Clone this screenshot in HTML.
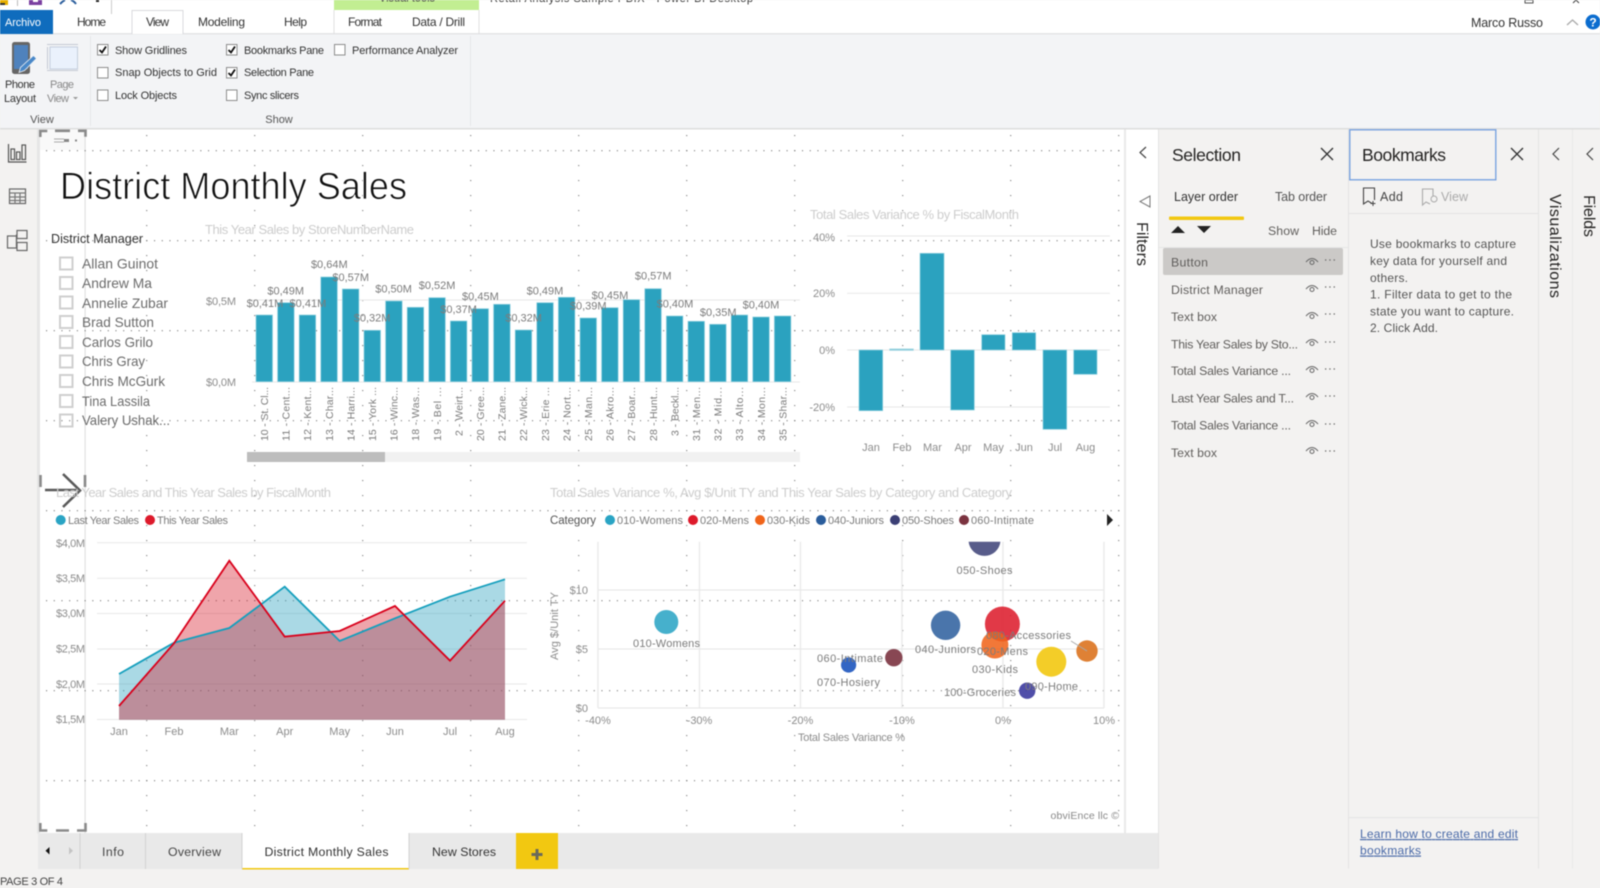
<!DOCTYPE html>
<html lang="en"><head><meta charset="utf-8"><title>District Monthly Sales</title>
<style>
html,body{margin:0;padding:0;width:1600px;height:888px;overflow:hidden;background:#f3f2f1}
svg{display:block;filter:blur(.45px)}
text{font-family:"Liberation Sans",sans-serif;font-size:11px;fill:#444}
.r{font-size:11px;fill:#333}
.m{font-size:12px;fill:#333}
.s{font-size:12.3px;fill:#605e5c}
.t{font-size:13px;fill:#cdcdcd}
.d{font-size:11px;fill:#7c7c7c}
.a{font-size:11px;fill:#8c8c8c}
.x{font-size:10.5px;fill:#7c7c7c}
.sl{font-size:14px;fill:#6c6c6c}
.h{font-size:17.5px;fill:#252423}
.v{font-size:16px;fill:#252423}
.dots line{stroke:#7c7c7c;stroke-width:1.1}
.g{stroke:#ececec;stroke-width:1.2}
.b rect{fill:#2ba2bf;stroke:#8fd0df;stroke-width:.7}
</style></head><body>
<svg width="1600" height="888" viewBox="0 0 1600 888" xmlns="http://www.w3.org/2000/svg">
<!-- backgrounds -->
<rect width="1600" height="888" fill="#f3f2f1"/>
<rect y="0" width="1600" height="34" fill="#fff"/>
<rect y="34" width="1600" height="94" fill="#f3f4f6"/>
<rect y="33" width="1600" height="1.5" fill="#e4e5e7"/>
<rect y="128" width="1600" height="1.5" fill="#dddddd"/>
<!-- top quick access -->
<rect x="0" y="0" width="8" height="5" fill="#e8b100"/><rect x="0" y="3" width="5" height="2" fill="#333"/>
<rect x="17" y="0" width="1" height="6" fill="#bbb"/>
<path d="M29 0h13v5H29z" fill="#7a3fa0"/><rect x="33" y="0" width="5" height="2" fill="#fff"/>
<path d="M60 4Q63 1 65 0M71 0Q74 1 76 4" stroke="#2a5d9c" stroke-width="2" fill="none"/>
<rect x="96" y="0" width="3" height="2" fill="#222"/>
<rect x="111" y="0" width="1" height="14" fill="#ccc"/>
<rect x="334" y="0" width="145" height="10" fill="#c2ee92"/>
<text x="407" y="1.500" text-anchor="middle" class="r">Visual tools</text>
<text x="490" y="2" class="r" textLength="263">Retail Analysis Sample PBIX - Power BI Desktop</text>
<path d="M1525 3V0h8v3h-8z" fill="none" stroke="#555"/>
<path d="M1573 3l3-3M1579 3l-3-3" stroke="#444" fill="none"/>
<!-- tabs -->
<rect x="0" y="10" width="53" height="24" fill="#0f6cbd"/>
<text x="5" y="26" style="fill:#fff" font-size="11" textLength="36">Archivo</text>
<text x="77" y="26" class="m" textLength="29">Home</text>
<path d="M132 34V10.500H183V34" fill="#fff" stroke="#d9dadd"/>
<text x="146" y="26" class="m" textLength="23">View</text>
<text x="198" y="26" class="m" textLength="47">Modeling</text>
<text x="284" y="26" class="m" textLength="23">Help</text>
<path d="M334 10v24M479 10v24" stroke="#e0e0e0"/>
<text x="348" y="26" class="m" textLength="34">Format</text>
<text x="412" y="26" class="m" textLength="53">Data / Drill</text>
<text x="1471" y="27" style="font-size:12.500px;fill:#333" textLength="72">Marco Russo</text>
<path d="M1567 25l5.500-5 5.500 5" stroke="#aaa" stroke-width="1.300" fill="none"/>
<circle cx="1593" cy="22" r="7.500" fill="#0a6ccf"/>
<text x="1593" y="26.500" text-anchor="middle" style="font-size:12px;font-weight:bold;fill:#fff">?</text>
<!-- ribbon view group -->
<rect x="12" y="42" width="18" height="32" rx="2.500" fill="#666"/>
<rect x="14" y="45" width="14" height="24" fill="#4f82bd"/>
<path d="M19 72.500l1.500-5 13-12 3 3-12 12z" fill="#4a88c8" stroke="#f3f4f6" stroke-width=".8"/>
<text x="20" y="88" text-anchor="middle" class="r" textLength="30">Phone</text>
<text x="20" y="102" text-anchor="middle" class="r" textLength="32">Layout</text>
<path d="M47 44.500h31M47 70.500h31" stroke="#c4cad4"/>
<rect x="50" y="47" width="27.500" height="22" fill="#eaf1fc" stroke="#c4cedd"/>
<rect x="47" y="47" width="1" height="22" fill="#c4cad4"/>
<text x="62" y="88" text-anchor="middle" style="font-size:11px;fill:#888" textLength="24">Page</text>
<text x="58" y="102" text-anchor="middle" style="font-size:11px;fill:#888" textLength="22">View</text>
<path d="M73 97h5l-2.500 2.500z" fill="#999"/>
<text x="42" y="123" text-anchor="middle" style="font-size:11px;fill:#555">View</text>
<text x="279" y="123" text-anchor="middle" style="font-size:11px;fill:#555">Show</text>
<path d="M90.500 36v90M470.500 36v90" stroke="#e6e7e9"/>
<!-- checkboxes -->
<g fill="#fff" stroke="#8d8d8d">
<rect x="97.500" y="44.500" width="10.500" height="10.500"/><rect x="97.500" y="67.500" width="10.500" height="10.500"/><rect x="97.500" y="90" width="10.500" height="10.500"/>
<rect x="226.500" y="44.500" width="10.500" height="10.500"/><rect x="226.500" y="67.500" width="10.500" height="10.500"/><rect x="226.500" y="90" width="10.500" height="10.500"/>
<rect x="334.500" y="44.500" width="10.500" height="10.500"/>
</g>
<g fill="none" stroke="#111" stroke-width="1.800">
<path d="M99.500 50l2.500 2.500 4-6"/><path d="M228.500 50l2.500 2.500 4-6"/><path d="M228.500 73l2.500 2.500 4-6"/>
</g>
<text x="115" y="54" class="r" textLength="72">Show Gridlines</text>
<text x="115" y="76" class="r" textLength="102">Snap Objects to Grid</text>
<text x="115" y="99" class="r" textLength="62">Lock Objects</text>
<text x="244" y="54" class="r" textLength="80">Bookmarks Pane</text>
<text x="244" y="76" class="r" textLength="70">Selection Pane</text>
<text x="244" y="99" class="r" textLength="55">Sync slicers</text>
<text x="352" y="54" class="r" textLength="106">Performance Analyzer</text>

<!-- left nav -->
<rect x="37" y="129.500" width="3" height="704" fill="#e6e6e6"/>
<g fill="none" stroke="#555" stroke-width="1.200">
<path d="M8.500 144v18h18"/>
<rect x="11" y="149" width="3.500" height="10.500"/><rect x="16.500" y="152" width="3.500" height="7.500"/><rect x="22" y="145" width="3.500" height="14.500"/>
<rect x="9.500" y="189" width="16" height="14.500" stroke="#666"/>
<path d="M9.500 193h16M9.500 197h16M9.500 200.500h16M15 193v10.500M20 193v10.500" stroke="#777"/>
<rect x="7.500" y="236" width="9" height="12" stroke="#666"/>
<rect x="17" y="230.500" width="10" height="8" stroke="#666"/>
<rect x="17" y="242.500" width="10" height="8" stroke="#666"/>
<path d="M16.500 234.500v12" stroke="#666"/>
</g>

<!-- canvas -->
<rect x="40" y="129.500" width="1084" height="704" fill="#fff"/>
<rect x="40" y="130" width="46" height="20" fill="#f9f9f9"/>
<rect x="84.500" y="129.500" width="1.200" height="704" fill="#e2e2e2"/>
<rect x="1124" y="129.500" width="2" height="704" fill="#e9e9e9"/>
<rect x="1126" y="129.500" width="32" height="704" fill="#fff"/>
<rect x="1158" y="129.500" width="1" height="739" fill="#e3e3e3"/>

<!-- grid dots -->
<g class="dots" stroke-dasharray="1.100 6.614">
<line x1="46" x2="1124" y1="150.700" y2="150.700"/>
<line x1="46" x2="1124" y1="240.700" y2="240.700"/>
<line x1="46" x2="1124" y1="330.700" y2="330.700"/>
<line x1="46" x2="1124" y1="420.700" y2="420.700"/>
<line x1="46" x2="1124" y1="510.700" y2="510.700"/>
<line x1="46" x2="1124" y1="600.700" y2="600.700"/>
<line x1="46" x2="1124" y1="690.700" y2="690.700"/>
<line x1="46" x2="1124" y1="780.700" y2="780.700"/>
</g>
<g class="dots" stroke-dasharray="1.100 13.900">
<line x1="146.700" x2="146.700" y1="135" y2="832"/>
<line x1="254.700" x2="254.700" y1="135" y2="832"/>
<line x1="362.700" x2="362.700" y1="135" y2="832"/>
<line x1="470.700" x2="470.700" y1="135" y2="832"/>
<line x1="578.700" x2="578.700" y1="135" y2="832"/>
<line x1="686.700" x2="686.700" y1="135" y2="832"/>
<line x1="794.700" x2="794.700" y1="135" y2="832"/>
<line x1="902.700" x2="902.700" y1="135" y2="832"/>
<line x1="1010.700" x2="1010.700" y1="135" y2="832"/>
<line x1="1118.700" x2="1118.700" y1="135" y2="832"/>
</g>

<!-- selection handles -->
<g fill="none" stroke="#8a8a8a" stroke-width="2.600">
<path d="M40.300 137v-6h7M55 130.800h15M78 130.800h7.500v6"/>
<path d="M40.300 823v7.500h7M56 830.500h13M77 830.500h8.500v-7.500"/>
<path d="M40.500 475v12M85 475v12"/>
</g>
<path d="M54 139h10M54 142h10" stroke="#aaa"/><rect x="64" y="139" width="5" height="3" fill="#888"/><rect x="75" y="139.500" width="2" height="2" fill="#888"/>

<!-- title -->
<text x="60" y="199" style="font-size:38px;fill:#111;stroke:#fff;stroke-width:.8" textLength="347" lengthAdjust="spacingAndGlyphs">District Monthly Sales</text>

<!-- slicer -->
<text x="51" y="243" style="font-size:12.500px;fill:#333" textLength="92">District Manager</text>
<g fill="none" stroke="#cfcfcf" stroke-width="2">
<rect x="60" y="257.500" width="12.500" height="12"/><rect x="60" y="277" width="12.500" height="12"/><rect x="60" y="296.500" width="12.500" height="12"/><rect x="60" y="316" width="12.500" height="12"/><rect x="60" y="336" width="12.500" height="12"/><rect x="60" y="355.500" width="12.500" height="12"/><rect x="60" y="375" width="12.500" height="12"/><rect x="60" y="395" width="12.500" height="12"/><rect x="60" y="414.500" width="12.500" height="12"/>
</g>
<text x="82" y="268.500" class="sl" textLength="76" lengthAdjust="spacingAndGlyphs">Allan Guinot</text>
<text x="82" y="288" class="sl" textLength="70" lengthAdjust="spacingAndGlyphs">Andrew Ma</text>
<text x="82" y="308" class="sl" textLength="86" lengthAdjust="spacingAndGlyphs">Annelie Zubar</text>
<text x="82" y="327" class="sl" textLength="72" lengthAdjust="spacingAndGlyphs">Brad Sutton</text>
<text x="82" y="347" class="sl" textLength="71" lengthAdjust="spacingAndGlyphs">Carlos Grilo</text>
<text x="82" y="366" class="sl" textLength="63" lengthAdjust="spacingAndGlyphs">Chris Gray</text>
<text x="82" y="386" class="sl" textLength="83" lengthAdjust="spacingAndGlyphs">Chris McGurk</text>
<text x="82" y="406" class="sl" textLength="68" lengthAdjust="spacingAndGlyphs">Tina Lassila</text>
<text x="82" y="425" class="sl" textLength="88" lengthAdjust="spacingAndGlyphs">Valery Ushak...</text>

<!-- bar chart -->
<text x="205" y="234" class="t" textLength="209">This Year Sales by StoreNumberName</text>
<text x="206" y="305" class="a" textLength="30">$0,5M</text>
<text x="206" y="386" class="a" textLength="30">$0,0M</text>
<path d="M252 300h548M252 382h548" class="g"/>
<g class="b">
<rect x="256" y="315" width="16.500" height="66.700"/>
<rect x="277.600" y="302.700" width="16.500" height="79"/>
<rect x="299.200" y="315" width="16.500" height="66.700"/>
<rect x="320.800" y="277" width="16.500" height="104.700"/>
<rect x="342.400" y="289" width="16.500" height="92.700"/>
<rect x="364" y="330.300" width="16.500" height="51.400"/>
<rect x="385.600" y="301" width="16.500" height="80.700"/>
<rect x="407.200" y="307.300" width="16.500" height="74.400"/>
<rect x="428.800" y="297.700" width="16.500" height="84"/>
<rect x="450.400" y="321" width="16.500" height="60.700"/>
<rect x="472" y="308.700" width="16.500" height="73"/>
<rect x="493.600" y="304.300" width="16.500" height="77.400"/>
<rect x="515.200" y="330" width="16.500" height="51.700"/>
<rect x="536.800" y="302.700" width="16.500" height="79"/>
<rect x="558.400" y="297.300" width="16.500" height="84.400"/>
<rect x="580" y="318" width="16.500" height="63.700"/>
<rect x="601.600" y="307.700" width="16.500" height="74"/>
<rect x="623.200" y="299.700" width="16.500" height="82"/>
<rect x="644.800" y="288.700" width="16.500" height="93"/>
<rect x="666.400" y="316" width="16.500" height="65.700"/>
<rect x="688" y="321.300" width="16.500" height="60.400"/>
<rect x="709.600" y="324.300" width="16.500" height="57.400"/>
<rect x="731.200" y="315" width="16.500" height="66.700"/>
<rect x="752.800" y="317" width="16.500" height="64.700"/>
<rect x="774.400" y="316" width="16.500" height="65.700"/>
</g>
<g class="d" text-anchor="middle">
<text class="d" x="265" y="307">$0,41M</text>
<text class="d" x="285.700" y="294.300">$0,49M</text>
<text class="d" x="307.900" y="307">$0,41M</text>
<text class="d" x="329.300" y="268">$0,64M</text>
<text class="d" x="350.700" y="281">$0,57M</text>
<text class="d" x="372.100" y="321.700">$0,32M</text>
<text class="d" x="393.600" y="292.700">$0,50M</text>
<text class="d" x="437.100" y="289">$0,52M</text>
<text class="d" x="458.600" y="313">$0,37M</text>
<text class="d" x="480.400" y="300">$0,45M</text>
<text class="d" x="523.600" y="321.700">$0,32M</text>
<text class="d" x="545" y="294.300">$0,49M</text>
<text class="d" x="588.200" y="309.700">$0,39M</text>
<text class="d" x="610" y="299">$0,45M</text>
<text class="d" x="653.200" y="279.700">$0,57M</text>
<text class="d" x="675" y="307.700">$0,40M</text>
<text class="d" x="718.200" y="316">$0,35M</text>
<text class="d" x="761" y="308.700">$0,40M</text>
</g>
<g class="x" text-anchor="end">
<text class="x" transform="translate(268,387) rotate(-90)" textLength="54">10 - St. Cl...</text>
<text class="x" transform="translate(289.600,387) rotate(-90)" textLength="54">11 - Cent...</text>
<text class="x" transform="translate(311.200,387) rotate(-90)" textLength="54">12 - Kent...</text>
<text class="x" transform="translate(332.800,387) rotate(-90)" textLength="54">13 - Char...</text>
<text class="x" transform="translate(354.400,387) rotate(-90)" textLength="54">14 - Harri...</text>
<text class="x" transform="translate(376,387) rotate(-90)" textLength="54">15 - York ...</text>
<text class="x" transform="translate(397.600,387) rotate(-90)" textLength="54">16 - Winc...</text>
<text class="x" transform="translate(419.200,387) rotate(-90)" textLength="54">18 - Was...</text>
<text class="x" transform="translate(440.800,387) rotate(-90)" textLength="54">19 - Bel ...</text>
<text class="x" transform="translate(462.400,387) rotate(-90)" textLength="49">2 - Weirt...</text>
<text class="x" transform="translate(484,387) rotate(-90)" textLength="54">20 - Gree...</text>
<text class="x" transform="translate(505.600,387) rotate(-90)" textLength="54">21 - Zane...</text>
<text class="x" transform="translate(527.200,387) rotate(-90)" textLength="54">22 - Wick...</text>
<text class="x" transform="translate(548.800,387) rotate(-90)" textLength="54">23 - Erie ...</text>
<text class="x" transform="translate(570.400,387) rotate(-90)" textLength="54">24 - Nort...</text>
<text class="x" transform="translate(592,387) rotate(-90)" textLength="54">25 - Man...</text>
<text class="x" transform="translate(613.600,387) rotate(-90)" textLength="54">26 - Akro...</text>
<text class="x" transform="translate(635.200,387) rotate(-90)" textLength="54">27 - Boar...</text>
<text class="x" transform="translate(656.800,387) rotate(-90)" textLength="54">28 - Hunt...</text>
<text class="x" transform="translate(678.400,387) rotate(-90)" textLength="49">3 - Beckl...</text>
<text class="x" transform="translate(700,387) rotate(-90)" textLength="54">31 - Men...</text>
<text class="x" transform="translate(721.600,387) rotate(-90)" textLength="54">32 - Mid...</text>
<text class="x" transform="translate(743.200,387) rotate(-90)" textLength="54">33 - Alto...</text>
<text class="x" transform="translate(764.800,387) rotate(-90)" textLength="54">34 - Mon...</text>
<text class="x" transform="translate(786.400,387) rotate(-90)" textLength="54">35 - Shar...</text>
</g>
<rect x="247" y="452" width="553" height="10" fill="#f1f1f1"/>
<rect x="247" y="452" width="138" height="10" fill="#bdbdbd"/>

<!-- variance chart -->
<text x="810" y="219" class="t" textLength="209">Total Sales Variance % by FiscalMonth</text>
<path d="M847 236h263M847 293.300h263M847 350h263M847 407h263" class="g"/>
<g class="a" text-anchor="end">
<text class="a" x="835" y="241">40%</text><text class="a" x="835" y="297">20%</text><text class="a" x="835" y="354">0%</text><text class="a" x="835" y="411">-20%</text>
</g>
<g class="b">
<rect x="859" y="350" width="23.700" height="60.700"/>
<rect x="889.700" y="349" width="23.600" height="1.300" style="fill:#8fc9d8"/>
<rect x="920" y="253.300" width="24" height="96.700"/>
<rect x="950.700" y="350" width="23.600" height="60"/>
<rect x="981.700" y="334.700" width="23.300" height="15.300"/>
<rect x="1012.300" y="332.700" width="23.400" height="17.300"/>
<rect x="1043" y="350" width="23.700" height="79.300"/>
<rect x="1073.700" y="350" width="23.300" height="24.300"/>
</g>
<g class="a" text-anchor="middle">
<text class="a" x="871" y="451">Jan</text><text class="a" x="902" y="451">Feb</text><text class="a" x="932.500" y="451">Mar</text><text class="a" x="963" y="451">Apr</text><text class="a" x="993.500" y="451">May</text><text class="a" x="1024" y="451">Jun</text><text class="a" x="1055" y="451">Jul</text><text class="a" x="1085.500" y="451">Aug</text>
</g>

<!-- arrow button -->
<path d="M45 490H79M63 474L80 490.500L63 507" fill="none" stroke="#5a5a5a" stroke-width="2.600"/>

<!-- area chart -->
<text x="56" y="497" class="t" textLength="275">Last Year Sales and This Year Sales by FiscalMonth</text>
<circle cx="60.700" cy="520" r="5" fill="#2aa4c4"/><text x="68" y="524" class="d" textLength="71">Last Year Sales</text>
<circle cx="150" cy="520" r="5" fill="#dd1a2b"/><text x="157" y="524" class="d" textLength="71">This Year Sales</text>
<g class="a">
<text class="a" x="56" y="547" textLength="29">$4,0M</text><text class="a" x="56" y="582" textLength="29">$3,5M</text><text class="a" x="56" y="617" textLength="29">$3,0M</text><text class="a" x="56" y="652.500" textLength="29">$2,5M</text><text class="a" x="56" y="688" textLength="29">$2,0M</text><text class="a" x="56" y="723" textLength="29">$1,5M</text>
</g>
<path d="M97 542.700h430M97 578.300h430M97 613.500h430M97 649h430M97 684h430M97 719.500h430" class="g"/>
<path d="M119 674L174 642.700L229.300 628L284.700 586.700L339.700 641L395 618.300L450 596.700L505 579.300V719.700H119Z" fill="#2aa0bd" fill-opacity=".4"/>
<path d="M119 706L174 643.300L229.300 560.700L284.700 636.700L339.700 631L395 606L450 660.700L505 600.700V719.700H119Z" fill="#d81e2e" fill-opacity=".4"/>
<path d="M119 674L174 642.700L229.300 628L284.700 586.700L339.700 641L395 618.300L450 596.700L505 579.300" fill="none" stroke="#159fbd" stroke-width="1.800"/>
<path d="M119 706L174 643.300L229.300 560.700L284.700 636.700L339.700 631L395 606L450 660.700L505 600.700" fill="none" stroke="#d9001b" stroke-width="1.800"/>
<g class="a" text-anchor="middle">
<text class="a" x="119" y="735">Jan</text><text class="a" x="174" y="735">Feb</text><text class="a" x="229.300" y="735">Mar</text><text class="a" x="284.700" y="735">Apr</text><text class="a" x="339.700" y="735">May</text><text class="a" x="395" y="735">Jun</text><text class="a" x="450" y="735">Jul</text><text class="a" x="505" y="735">Aug</text>
</g>

<!-- scatter chart -->
<text x="550" y="497" class="t" textLength="462">Total Sales Variance %, Avg $/Unit TY and This Year Sales by Category and Category</text>
<text x="550" y="524" style="font-size:11.500px;fill:#555" textLength="46">Category</text>
<circle cx="610" cy="520" r="5" fill="#2aa4c4"/><text x="617" y="524" class="d" textLength="66">010-Womens</text>
<circle cx="693" cy="520" r="5" fill="#dd1a2b"/><text x="700" y="524" class="d" textLength="49">020-Mens</text>
<circle cx="760" cy="520" r="5" fill="#f0641a"/><text x="767" y="524" class="d" textLength="43">030-Kids</text>
<circle cx="821" cy="520" r="5" fill="#2a5d9c"/><text x="828" y="524" class="d" textLength="56">040-Juniors</text>
<circle cx="895" cy="520" r="5" fill="#3b3f75"/><text x="902" y="524" class="d" textLength="52">050-Shoes</text>
<circle cx="964" cy="520" r="5" fill="#7b3340"/><text x="971" y="524" class="d" textLength="63">060-Intimate</text>
<path d="M1107 514l6 6-6 6z" fill="#222"/>
<path d="M598 541.700V708M699.500 541.700V708M800.500 541.700V708M902 541.700V708M1003 541.700V708M1104 541.700V708M598 590H1104M598 649H1104M598 708H1104" stroke="#e9e9e9" stroke-width="1.300"/>
<g class="a" text-anchor="end">
<text class="a" x="588" y="594">$10</text><text class="a" x="588" y="653">$5</text><text class="a" x="588" y="712">$0</text>
</g>
<g class="a" text-anchor="middle">
<text class="a" x="598" y="724">-40%</text><text class="a" x="699.500" y="724">-30%</text><text class="a" x="800.500" y="724">-20%</text><text class="a" x="902" y="724">-10%</text><text class="a" x="1003" y="724">0%</text><text class="a" x="1104" y="724">10%</text>
</g>
<text x="798" y="741" class="a" textLength="107">Total Sales Variance %</text>
<text transform="translate(558,660) rotate(-90)" class="a" textLength="68">Avg $/Unit TY</text>
<path d="M968.600 541.700A16 16 0 0 0 1000.400 541.700Z" fill="#3b3f75" fill-opacity=".85"/>
<circle cx="666.300" cy="622" r="12" fill="#2aa4c4" fill-opacity=".87"/>
<circle cx="1002.400" cy="624" r="17.500" fill="#dc1c2c" fill-opacity=".87"/>
<circle cx="945.600" cy="625.300" r="14.700" fill="#2a5d9c" fill-opacity=".85"/>
<circle cx="994.900" cy="645" r="13.500" fill="#f0641a" fill-opacity=".87"/>
<circle cx="1051.300" cy="661.700" r="15" fill="#f2c811" fill-opacity=".9"/>
<circle cx="1087" cy="651" r="10.700" fill="#dd7a2a" fill-opacity=".95"/>
<circle cx="893.800" cy="657.700" r="8.700" fill="#7b3340" fill-opacity=".9"/>
<circle cx="848.600" cy="665" r="7.600" fill="#3366c4"/>
<circle cx="1027.200" cy="690.700" r="8.200" fill="#3d3ba0" fill-opacity=".9"/>
<path d="M1071 641L1087 651" stroke="#aaa"/>
<g class="d">
<text class="d" x="633" y="647" textLength="67">010-Womens</text>
<text class="d" x="956.500" y="574" textLength="56">050-Shoes</text>
<text class="d" x="915" y="653" textLength="61">040-Juniors</text>
<text class="d" x="977" y="655" textLength="51">020-Mens</text>
<text class="d" x="986" y="639" textLength="85">080-Accessories</text>
<text class="d" x="972" y="673" textLength="46">030-Kids</text>
<text class="d" x="817" y="662" textLength="66">060-Intimate</text>
<text class="d" x="817" y="686" textLength="63">070-Hosiery</text>
<text class="d" x="944" y="696" textLength="72">100-Groceries</text>
<text class="d" x="1025" y="690" textLength="53">090-Home</text>
</g>
<text x="1050.500" y="819" style="font-size:10.500px;fill:#888" textLength="68.500">obviEnce llc ©</text>

<!-- page tabs -->
<rect x="38" y="833" width="1120" height="36" fill="#e9e9e9"/>
<rect x="242" y="833" width="167" height="36" fill="#fff"/>
<rect x="242" y="868" width="167" height="1.500" fill="#f2c811"/>
<rect x="516" y="833" width="42" height="36" fill="#f2c811"/>
<path d="M80 833v36M145.500 833v36M242 833v36M409 833v36" stroke="#d2d2d2"/>
<path d="M49.500 847v7.500l-4-3.750z" fill="#111"/>
<path d="M69 847v7.500l4-3.750z" fill="#c4c4c4"/>
<path d="M537 849v11M531.500 854.500h11" stroke="#6a6a5a" stroke-width="3"/>
<text x="102" y="856" class="s" style="fill:#444" textLength="22">Info</text>
<text x="168" y="856" class="s" style="fill:#444" textLength="53">Overview</text>
<text x="264.500" y="856" class="s" style="fill:#333" textLength="124">District Monthly Sales</text>
<text x="432" y="856" class="s" style="fill:#333" textLength="64">New Stores</text>
<text x="0" y="885" style="font-size:11px;fill:#444" textLength="63">PAGE 3 OF 4</text>

<!-- filters pane -->
<path d="M1146 147l-6 5.500 6 5.500" fill="none" stroke="#444" stroke-width="1.200"/>
<path d="M1150 196l-10 5.500 10 5.500z" fill="none" stroke="#777"/>
<text transform="translate(1137,222) rotate(90)" class="v" textLength="44">Filters</text>

<!-- selection pane -->
<text x="1172" y="161" class="h" textLength="69">Selection</text>
<path d="M1321 148l12 12M1333 148l-12 12" stroke="#333" stroke-width="1.300"/>
<text x="1174" y="201" style="font-size:12.500px;fill:#333" textLength="64">Layer order</text>
<text x="1275" y="201" style="font-size:12.500px;fill:#555" textLength="52">Tab order</text>
<rect x="1169" y="216.500" width="75" height="3.500" rx="1" fill="#f2c811"/>
<path d="M1171 233l7-7 7 7z" fill="#222"/><path d="M1197 226h14l-7 7z" fill="#222"/>
<text x="1268" y="235" class="s" textLength="31">Show</text>
<text x="1312" y="235" class="s" textLength="25">Hide</text>
<rect x="1159" y="247" width="189" height="1" fill="#e6e6e6"/>
<rect x="1163" y="248" width="180" height="27" rx="2" fill="#cbc9c7"/>
<text x="1171" y="266.500" class="s" textLength="37">Button</text>
<text x="1171" y="294" class="s" textLength="92">District Manager</text>
<text x="1171" y="321" class="s" textLength="46">Text box</text>
<text x="1171" y="348.500" class="s" textLength="127">This Year Sales by Sto...</text>
<text x="1171" y="375" class="s" textLength="120">Total Sales Variance ...</text>
<text x="1171" y="402.500" class="s" textLength="123">Last Year Sales and T...</text>
<text x="1171" y="429.500" class="s" textLength="120">Total Sales Variance ...</text>
<text x="1171" y="457" class="s" textLength="46">Text box</text>
<g fill="none" stroke="#666" stroke-width="1">
<path d="M1306 262Q1312 255 1318 262"/><circle cx="1312" cy="262.500" r="2"/>
<path d="M1306 289Q1312 282 1318 289"/><circle cx="1312" cy="289.500" r="2"/>
<path d="M1306 316Q1312 309 1318 316"/><circle cx="1312" cy="316.500" r="2"/>
<path d="M1306 343Q1312 336 1318 343"/><circle cx="1312" cy="343.500" r="2"/>
<path d="M1306 370Q1312 363 1318 370"/><circle cx="1312" cy="370.500" r="2"/>
<path d="M1306 397Q1312 390 1318 397"/><circle cx="1312" cy="397.500" r="2"/>
<path d="M1306 424Q1312 417 1318 424"/><circle cx="1312" cy="424.500" r="2"/>
<path d="M1306 451Q1312 444 1318 451"/><circle cx="1312" cy="451.500" r="2"/>
</g>
<g stroke="#666" stroke-width="1.300" stroke-dasharray="1.300 3">
<line x1="1325" x2="1337" y1="260" y2="260"/><line x1="1325" x2="1337" y1="287" y2="287"/><line x1="1325" x2="1337" y1="314" y2="314"/><line x1="1325" x2="1337" y1="342" y2="342"/><line x1="1325" x2="1337" y1="369" y2="369"/><line x1="1325" x2="1337" y1="396" y2="396"/><line x1="1325" x2="1337" y1="424" y2="424"/><line x1="1325" x2="1337" y1="451" y2="451"/>
</g>

<!-- bookmarks pane -->
<rect x="1348" y="129.500" width="1" height="739" fill="#e3e3e3"/>
<rect x="1349.800" y="129.800" width="146" height="50" fill="#f3f2f1" stroke="#7aa3e0" stroke-width="1.400"/>
<text x="1362" y="161" class="h" textLength="84">Bookmarks</text>
<path d="M1511 148l12 12M1523 148l-12 12" stroke="#333" stroke-width="1.300"/>
<path d="M1372 203.500l-4-2.500-4.500 3v-16h11v12" fill="none" stroke="#444" stroke-width="1.100"/>
<path d="M1373 201v5M1370.500 203.500h5" stroke="#444"/>
<text x="1380" y="201" style="font-size:12.500px;fill:#444" textLength="23">Add</text>
<path d="M1430 204l-4-2-3.500 3v-16h10.500v7" fill="none" stroke="#aaa" stroke-width="1.100"/>
<circle cx="1434" cy="199" r="3" fill="none" stroke="#aaa"/>
<text x="1441" y="201" style="font-size:12.500px;fill:#aaa" textLength="27">View</text>
<rect x="1349" y="213" width="189" height="1" fill="#e3e3e3"/>
<g>
<text x="1370" y="248" class="m" style="fill:#555" textLength="146">Use bookmarks to capture</text>
<text x="1370" y="265" class="m" style="fill:#555" textLength="137">key data for yourself and</text>
<text x="1370" y="282" class="m" style="fill:#555" textLength="38">others.</text>
<text x="1370" y="298.500" class="m" style="fill:#555" textLength="142">1. Filter data to get to the</text>
<text x="1370" y="315.500" class="m" style="fill:#555" textLength="144">state you want to capture.</text>
<text x="1370" y="332" class="m" style="fill:#555" textLength="68">2. Click Add.</text>
</g>
<rect x="1349" y="817" width="189" height="1.200" fill="#e6e6e6"/>
<text x="1360" y="838" style="font-size:12px;fill:#4a6aa8;text-decoration:underline" textLength="158">Learn how to create and edit</text>
<text x="1360" y="854.500" style="font-size:12px;fill:#4a6aa8;text-decoration:underline" textLength="61">bookmarks</text>

<!-- collapsed panes -->
<rect x="1538" y="129.500" width="1" height="739" fill="#e4e4e4"/>
<rect x="1572" y="129.500" width="1" height="739" fill="#e9e9e9"/>
<path d="M1559 148l-6 6 6 6M1593 148l-6 6 6 6" fill="none" stroke="#444" stroke-width="1.200"/>
<text transform="translate(1550,194) rotate(90)" class="v" textLength="104">Visualizations</text>
<text transform="translate(1584,195) rotate(90)" class="v" textLength="42">Fields</text>
</svg>
</body></html>
